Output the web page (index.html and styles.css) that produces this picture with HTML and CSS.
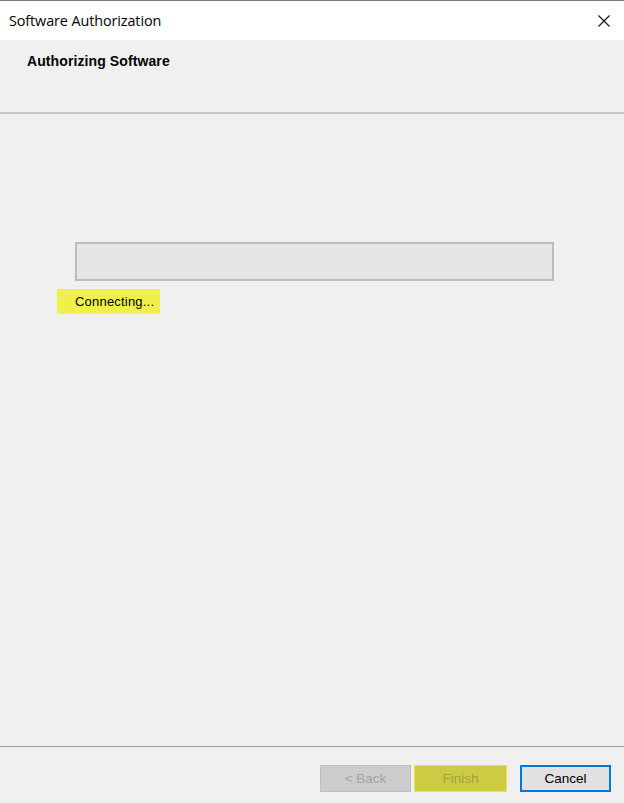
FILE: index.html
```html
<!DOCTYPE html>
<html>
<head>
<meta charset="utf-8">
<link rel="stylesheet" href="styles.css">
</head>
<body>
<div class="window">
  <div class="titlebar">
    <span class="title">Software Authorization</span>
    <svg class="close" width="12" height="12" viewBox="0 0 12 12"><path d="M0.5 0.5L11.5 11.5M11.5 0.5L0.5 11.5" stroke="#111" stroke-width="1.1" fill="none"/></svg>
  </div>
  <div class="header">
    <div class="header-title">Authorizing Software</div>
  </div>
  <div class="content">
    <div class="progress"></div>
    <div class="status"><span>Connecting...</span></div>
  </div>
  <div class="footer">
    <button class="btn btn-back">&lt; Back</button>
    <button class="btn btn-finish">Finish</button>
    <button class="btn btn-cancel">Cancel</button>
  </div>
</div>
</body>
</html>
```
FILE: styles.css
```css
html, body {
  margin: 0;
  padding: 0;
  background: #f0f0f0;
}
.window {
  width: 624px;
  height: 803px;
  box-sizing: border-box;
  border-top: 1px solid #7a7a7a;
  display: flex;
  flex-direction: column;
  background: #f0f0f0;
  font-family: "Liberation Sans", Arial, sans-serif;
}
.titlebar {
  height: 39px;
  background: #ffffff;
  display: flex;
  align-items: center;
  justify-content: space-between;
  padding: 0 14px 0 9px;
}
.title {
  font-family: "Open Sans", "Noto Sans", sans-serif;
  font-size: 14.4px;
  color: #000;
  letter-spacing: -0.1px;
}
.close {
  display: block;
}
.header {
  height: 59px;
  border-bottom: 2px solid #c8c8c8;
  padding: 13px 0 0 27px;
}
.header-title {
  font-weight: bold;
  font-size: 14px;
  color: #000;
  letter-spacing: 0.1px;
}
.content {
  flex: 1;
  padding: 128px 0 0 57px;
}
.progress {
  margin-left: 18px;
  width: 475px;
  height: 35px;
  background: #e6e6e6;
  border: 2px solid #bcbcbc;
}
.status {
  margin-top: 8px;
  display: flex;
}
.status span {
  background: #f0f04a;
  height: 25px;
  width: 85px;
  padding-left: 18px;
  line-height: 25px;
  font-size: 13px;
  letter-spacing: 0.2px;
  color: #000;
}
.footer {
  height: 57px;
  border-top: 1px solid #a0a0a0;
  display: flex;
  justify-content: flex-end;
  align-items: flex-start;
  padding: 18px 13px 0 0;
  box-sizing: border-box;
}
.btn {
  font-family: "Liberation Sans", Arial, sans-serif;
  font-size: 13.5px;
  height: 27px;
  box-sizing: border-box;
  padding: 0;
  margin: 0;
  cursor: default;
}
.btn-back {
  width: 91px;
  background: #cccccc;
  border: 1px solid #bfbfbf;
  color: #a3a3a3;
}
.btn-finish {
  width: 93px;
  margin-left: 3px;
  background: #cccc44;
  border: 1px solid #e8e83c;
  color: #a2a23c;
}
.btn-cancel {
  width: 91px;
  margin-left: 13px;
  background: #e1e1e1;
  border: 2px solid #0078d7;
  color: #000;
}
```
